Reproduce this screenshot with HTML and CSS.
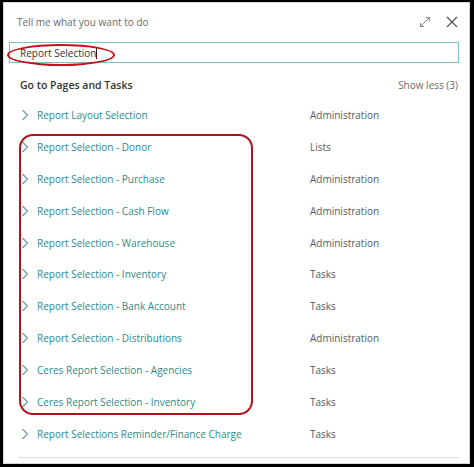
FILE: index.html
```html
<!DOCTYPE html>
<html>
<head>
<meta charset="utf-8">
<link rel="stylesheet" href="styles.css">
</head>
<body>
<div class="frame">
  <div class="panel">
    <div class="titlebar">
      <span class="title">Tell me what you want to do</span>
      <span class="icons">
        <svg class="ico" width="12" height="12" viewBox="0 0 12 12"><path d="M1.5 10.5 L10.5 1.5 M1.5 10.5 L1.5 7 M1.5 10.5 L5 10.5 M10.5 1.5 L7 1.5 M10.5 1.5 L10.5 5" fill="none" stroke="#8a8a8a" stroke-width="1"/></svg>
        <svg class="ico" width="12" height="12" viewBox="0 0 12 12"><path d="M1 1 L11 11 M11 1 L1 11" fill="none" stroke="#555" stroke-width="1.2"/></svg>
      </span>
    </div>
    <div class="search"><span class="query">Report Selection</span><span class="caret"></span></div>
    <div class="section">
      <span class="heading">Go to Pages and Tasks</span>
      <span class="more">Show less (3)</span>
    </div>
    <ul class="list">
      <li class="row"><svg class="chev" width="8" height="12" viewBox="0 0 8 12"><path d="M1.5 1 L6.5 6 L1.5 11" fill="none" stroke="#5d9c9e" stroke-width="1.1"/></svg><span class="name">Report Layout Selection</span><span class="cat">Administration</span></li>
      <li class="row"><svg class="chev" width="8" height="12" viewBox="0 0 8 12"><path d="M1.5 1 L6.5 6 L1.5 11" fill="none" stroke="#5d9c9e" stroke-width="1.1"/></svg><span class="name">Report Selection - Donor</span><span class="cat">Lists</span></li>
      <li class="row"><svg class="chev" width="8" height="12" viewBox="0 0 8 12"><path d="M1.5 1 L6.5 6 L1.5 11" fill="none" stroke="#5d9c9e" stroke-width="1.1"/></svg><span class="name">Report Selection - Purchase</span><span class="cat">Administration</span></li>
      <li class="row"><svg class="chev" width="8" height="12" viewBox="0 0 8 12"><path d="M1.5 1 L6.5 6 L1.5 11" fill="none" stroke="#5d9c9e" stroke-width="1.1"/></svg><span class="name">Report Selection - Cash Flow</span><span class="cat">Administration</span></li>
      <li class="row"><svg class="chev" width="8" height="12" viewBox="0 0 8 12"><path d="M1.5 1 L6.5 6 L1.5 11" fill="none" stroke="#5d9c9e" stroke-width="1.1"/></svg><span class="name">Report Selection - Warehouse</span><span class="cat">Administration</span></li>
      <li class="row"><svg class="chev" width="8" height="12" viewBox="0 0 8 12"><path d="M1.5 1 L6.5 6 L1.5 11" fill="none" stroke="#5d9c9e" stroke-width="1.1"/></svg><span class="name">Report Selection - Inventory</span><span class="cat">Tasks</span></li>
      <li class="row"><svg class="chev" width="8" height="12" viewBox="0 0 8 12"><path d="M1.5 1 L6.5 6 L1.5 11" fill="none" stroke="#5d9c9e" stroke-width="1.1"/></svg><span class="name">Report Selection - Bank Account</span><span class="cat">Tasks</span></li>
      <li class="row"><svg class="chev" width="8" height="12" viewBox="0 0 8 12"><path d="M1.5 1 L6.5 6 L1.5 11" fill="none" stroke="#5d9c9e" stroke-width="1.1"/></svg><span class="name">Report Selection - Distributions</span><span class="cat">Administration</span></li>
      <li class="row"><svg class="chev" width="8" height="12" viewBox="0 0 8 12"><path d="M1.5 1 L6.5 6 L1.5 11" fill="none" stroke="#5d9c9e" stroke-width="1.1"/></svg><span class="name">Ceres Report Selection - Agencies</span><span class="cat">Tasks</span></li>
      <li class="row"><svg class="chev" width="8" height="12" viewBox="0 0 8 12"><path d="M1.5 1 L6.5 6 L1.5 11" fill="none" stroke="#5d9c9e" stroke-width="1.1"/></svg><span class="name">Ceres Report Selection - Inventory</span><span class="cat">Tasks</span></li>
      <li class="row"><svg class="chev" width="8" height="12" viewBox="0 0 8 12"><path d="M1.5 1 L6.5 6 L1.5 11" fill="none" stroke="#5d9c9e" stroke-width="1.1"/></svg><span class="name">Report Selections Reminder/Finance Charge</span><span class="cat">Tasks</span></li>
    </ul>
    <div class="rule"></div>
    <div class="mark-ellipse"></div>
    <div class="mark-box"></div>
  </div>
</div>
</body>
</html>
```

FILE: styles.css
```css
* { box-sizing: border-box; }
html, body { margin: 0; padding: 0; }
body {
  width: 474px;
  height: 467px;
  background: #000;
  font-family: "Open Sans", "Noto Sans", sans-serif;
  font-size: 10px;
  overflow: hidden;
}
.frame {
  width: 474px;
  height: 467px;
  padding: 2px 4px 3px 3px;
}
.panel {
  position: relative;
  width: 100%;
  height: 100%;
  background: #fff;
  border: 1px solid #d8d8d8;
  padding: 0 11px 0 5px;
}
.titlebar {
  height: 38px;
  display: flex;
  align-items: center;
  justify-content: space-between;
  padding: 0 0 0 8px;
}
.title { color: #6b6b6b; font-size: 10px; }
.icons { display: flex; gap: 15px; align-items: center; }
.ico { display: block; }
.search {
  height: 21px;
  margin-top: 1px;
  border: 1.5px solid #7cc3c4;
  display: flex;
  align-items: center;
  padding-left: 10px;
  margin-right: -1px;
}
.query { color: #333; font-size: 10px; }
.caret { width: 1px; height: 12px; background: #222; margin-left: 0; }
.section {
  height: 36px;
  padding: 15px 0 0 11px;
  display: flex;
  align-items: flex-start;
  justify-content: space-between;
}
.heading { color: #333; font-weight: 600; font-size: 10.5px; }
.more { color: #6b6b6b; font-size: 10px; }
.list { list-style: none; margin: 0; padding: 0; }
.row {
  height: 31.9px;
  display: flex;
  align-items: center;
  padding-left: 12px;
}
.chev { display: block; margin-right: 8px; flex: none; }
.name { color: #2d8a8c; width: 273px; font-size: 10px; }
.cat { color: #5a5a5a; font-size: 10px; }
.rule {
  margin: 7px 0 0 9px;
  height: 1px;
  background: #dcdcdc;
}
.mark-ellipse {
  position: absolute;
  left: 3px;
  top: 41px;
  width: 108px;
  height: 22px;
  border: 2px solid #c0141e;
  border-radius: 50%;
}
.mark-box {
  position: absolute;
  left: 15px;
  top: 131px;
  width: 234px;
  height: 281px;
  border: 2px solid #b3131c;
  border-radius: 14px;
}
```
